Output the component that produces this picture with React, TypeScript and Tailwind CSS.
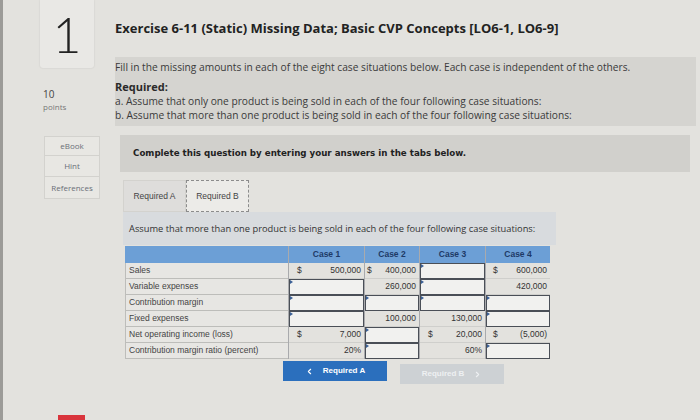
import { ChevronLeft, ChevronRight } from 'lucide-react';

type Cell = { dollar?: boolean; value?: string; input?: boolean };

const rows = [
  'Sales',
  'Variable expenses',
  'Contribution margin',
  'Fixed expenses',
  'Net operating income (loss)',
  'Contribution margin ratio (percent)',
];

const cases: { title: string; width: string; dollarPad: string; cells: Cell[] }[] = [
  {
    title: 'Case 1',
    width: 'w-[76px]',
    dollarPad: 'pl-[6px]',
    cells: [
      { dollar: true, value: '500,000' },
      { input: true },
      { input: true },
      { input: true },
      { dollar: true, value: '7,000' },
      { value: '20%' },
    ],
  },
  {
    title: 'Case 2',
    width: 'w-[55px]',
    dollarPad: 'pl-0',
    cells: [
      { dollar: true, value: '400,000' },
      { value: '260,000' },
      { input: true },
      { value: '100,000' },
      { input: true },
      { input: true },
    ],
  },
  {
    title: 'Case 3',
    width: 'w-[66px]',
    dollarPad: 'pl-[6px]',
    cells: [
      { input: true },
      { input: true },
      { input: true },
      { value: '130,000' },
      { dollar: true, value: '20,000' },
      { value: '60%' },
    ],
  },
  {
    title: 'Case 4',
    width: 'w-[65px]',
    dollarPad: 'pl-[5px]',
    cells: [
      { dollar: true, value: '600,000' },
      { value: '420,000' },
      { input: true },
      { input: true },
      { dollar: true, value: '(5,000)' },
      { input: true },
    ],
  },
];

function ValueCell({ cell, dollarPad }: { cell: Cell; dollarPad: string }) {
  if (cell.input) {
    return (
      <div className="relative h-[16px] border border-[#4a4f57] bg-[#f1f1ef]">
        <span className="absolute left-0 top-0 h-0 w-0 border-y-[2px] border-l-[3px] border-y-transparent border-l-[#3a5f95]" />
      </div>
    );
  }
  return (
    <div className="flex h-[16px] items-center justify-between border-b border-[#cfcfcc] pl-[2px] pr-[3px] text-[8.5px] text-[#333]">
      <span className={dollarPad}>{cell.dollar ? '$' : ''}</span>
      <span>{cell.value}</span>
    </div>
  );
}

export default function App() {
  return (
    <div className="flex h-[420px] w-[700px] overflow-hidden border-l-[3px] border-[#9c9b98] bg-[#e3e2de] font-['Open_Sans',sans-serif] text-[#333]">
      {/* Left rail */}
      <div className="flex w-[112px] shrink-0 flex-col pl-[37px]">
        <div className="flex h-[68px] w-[54px] items-center justify-center rounded-b-[3px] bg-[#e9e8e5] shadow-[0_0_2px_rgba(0,0,0,0.12)]">
          <span className="font-['Lato',sans-serif] text-[50px] font-light leading-none text-[#222]">1</span>
        </div>
        <div className="mt-[20px] pl-[3px] text-[10px] leading-[13px] text-[#444]">10</div>
        <div className="pl-[3px] text-[8px] leading-[11px] text-[#777]">points</div>
        <div className="mt-[24px] ml-[4px] flex w-[56px] flex-col border border-[#d3d2ce] bg-[#e8e7e3] text-[8px] text-[#6a6f78]">
          <div className="flex h-[19px] items-center justify-center border-b border-[#d3d2ce]">eBook</div>
          <div className="flex h-[21px] items-center justify-center border-b border-[#d3d2ce]">Hint</div>
          <div className="flex h-[21px] items-center justify-center">References</div>
        </div>
        <div className="mt-auto ml-[18px] h-[5px] w-[27px] bg-[#d9343c]" />
      </div>

      {/* Main */}
      <div className="flex flex-1 flex-col pr-[4px]">
        <h1 className="mt-[19px] text-[13px] font-bold leading-[18px] text-[#222]">
          Exercise 6-11 (Static) Missing Data; Basic CVP Concepts [LO6-1, LO6-9]
        </h1>
        <div className="mt-[20px] bg-[#d5d4d0] pb-[4px] pt-[3px] text-[10.2px] leading-[14px] text-[#3a3a3a]">
          <p>Fill in the missing amounts in each of the eight case situations below. Each case is independent of the others.</p>
          <p className="mt-[5px] text-[11px] font-bold leading-[15px] text-[#2a2a2a]">Required:</p>
          <p>a. Assume that only one product is being sold in each of the four following case situations:</p>
          <p>b. Assume that more than one product is being sold in each of the four following case situations:</p>
        </div>

        <div className="ml-[5px] mr-[6px] mt-[9px] flex h-[37px] items-center bg-[#d1d0cc] pl-[13px] font-['DejaVu_Sans',sans-serif] text-[8.7px] font-bold text-[#222]">
          Complete this question by entering your answers in the tabs below.
        </div>

        {/* Tabs */}
        <div className="ml-[8px] mt-[8px] flex items-stretch">
          <div className="flex h-[32px] w-[63px] items-center justify-center border border-[#d3d2ce] bg-[#dedddb] font-['Liberation_Sans',sans-serif] text-[8.5px] text-[#444]">
            Required A
          </div>
          <div className="flex h-[32px] w-[63px] items-center justify-center border border-dashed border-[#8c8c8c] bg-[#ecebe8] font-['Liberation_Sans',sans-serif] text-[8.5px] text-[#444]">
            Required B
          </div>
        </div>

        <div className="ml-[8px] mr-[140px] flex h-[33px] items-center bg-[#d8dbde] pl-[6px] text-[9.3px] text-[#333]">
          Assume that more than one product is being sold in each of the four following case situations:
        </div>

        {/* Table */}
        <div className="ml-[10px] mt-[1px] flex w-[425px] font-['Liberation_Sans',sans-serif]">
          <div className="w-[163px] shrink-0">
            <div className="h-[17px] bg-[#6c9fd6]" />
            {rows.map((r) => (
              <div
                key={r}
                className="flex h-[16px] items-center border-b border-l border-[#bdbdba] bg-[#e7e6e3] pl-[3px] text-[8.5px] text-[#444]"
              >
                {r}
              </div>
            ))}
          </div>
          {cases.map((c) => (
            <div key={c.title} className={`${c.width} shrink-0 border-l border-[#a9aaad]`}>
              <div className="flex h-[17px] items-center justify-center bg-[#6c9fd6] text-[8.5px] font-bold text-[#1e3a66]">
                {c.title}
              </div>
              {c.cells.map((cell, i) => (
                <ValueCell key={i} cell={cell} dollarPad={c.dollarPad} />
              ))}
            </div>
          ))}
        </div>

        {/* Nav buttons */}
        <div className="ml-[168px] mt-[2px] flex gap-[13px]">
          <div className="flex h-[20px] w-[104px] items-center justify-center gap-[9px] bg-[#2b6fbd] font-['Liberation_Sans',sans-serif] text-[8px] font-bold text-white">
            <ChevronLeft size={9} strokeWidth={3} />
            <span>Required A</span>
          </div>
          <div className="mt-[3px] flex h-[20px] w-[104px] items-center justify-center gap-[9px] bg-[#cdd1d4] font-['Liberation_Sans',sans-serif] text-[8px] font-bold text-[#eef0f2]">
            <span>Required B</span>
            <ChevronRight size={9} strokeWidth={3} />
          </div>
        </div>
      </div>
    </div>
  );
}
